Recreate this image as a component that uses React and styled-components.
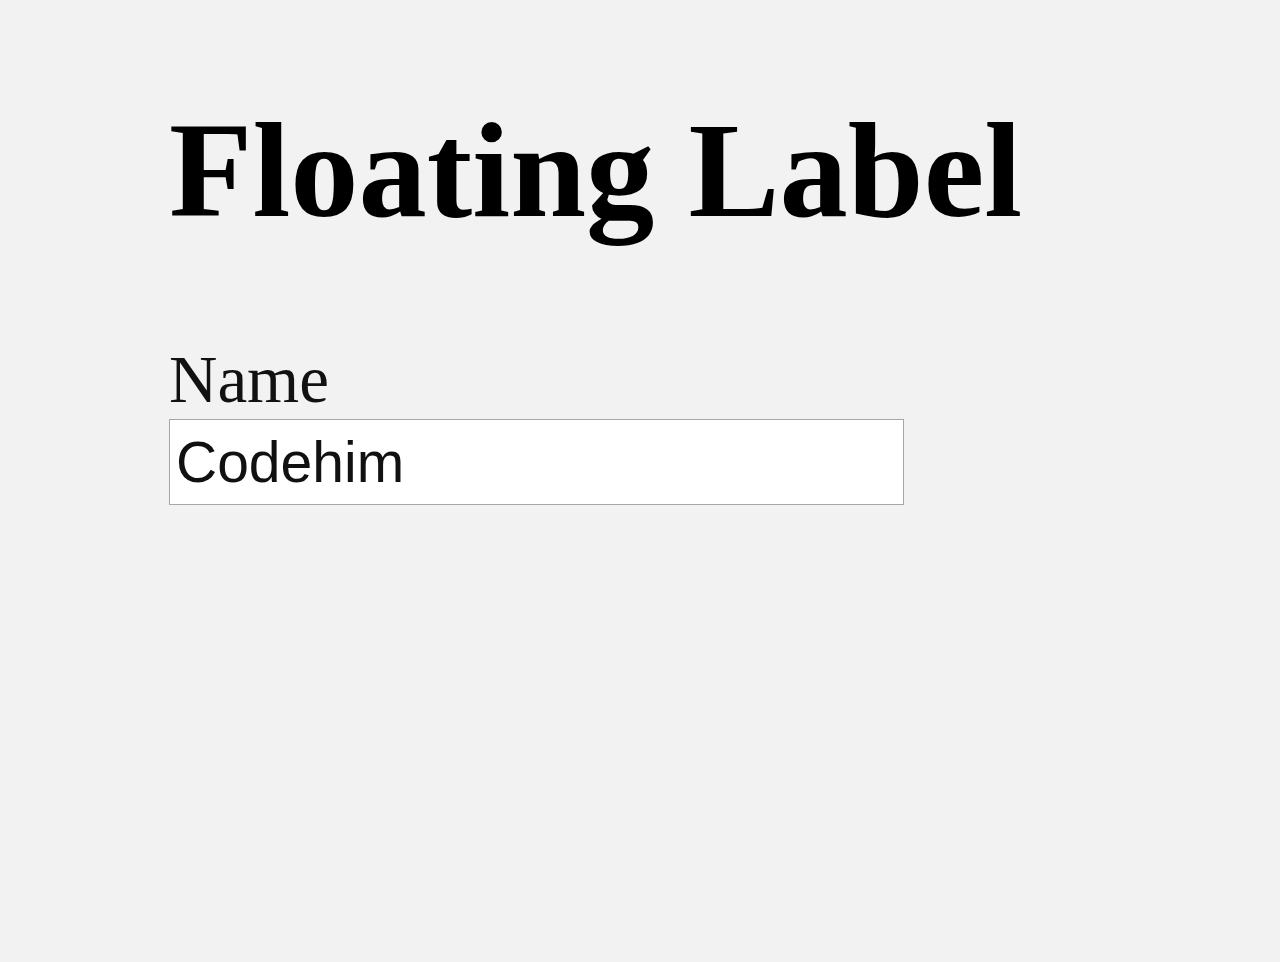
import React, { useState } from "react";
import styled, { createGlobalStyle } from "styled-components";

const GlobalStyle = createGlobalStyle`
  html, body {
    margin: 0;
    padding: 0;
    background: #f2f2f2;
  }
`;

const Page = styled.main`
  min-height: 962px;
  box-sizing: border-box;
  padding: 91px 0 0 169px;
  font-family: "Liberation Serif", "Times New Roman", serif;
  color: #000;
`;

const Title = styled.h1`
  margin: 0;
  font-size: 136.5px;
  font-weight: 700;
  line-height: normal;
`;

const Field = styled.div`
  display: flex;
  flex-direction: column;
  align-items: flex-start;
  gap: 1px;
  margin-top: 92px;
`;

const Label = styled.label`
  font-size: 67px;
  line-height: normal;
  color: #111;
`;

const Input = styled.input`
  box-sizing: border-box;
  width: 735px;
  height: 86px;
  padding: 0 6px;
  border: 1px solid #a6a6a6;
  background: #fff;
  font-family: "Liberation Sans", Arial, sans-serif;
  font-size: 57px;
  color: #111;
  outline: none;
`;

export default function App() {
  const [name, setName] = useState("Codehim");

  return (
    <>
      <GlobalStyle />
      <Page>
        <Title>Floating Label</Title>
        <Field>
          <Label htmlFor="name">Name</Label>
          <Input
            id="name"
            type="text"
            value={name}
            onChange={(e) => setName(e.target.value)}
          />
        </Field>
      </Page>
    </>
  );
}
